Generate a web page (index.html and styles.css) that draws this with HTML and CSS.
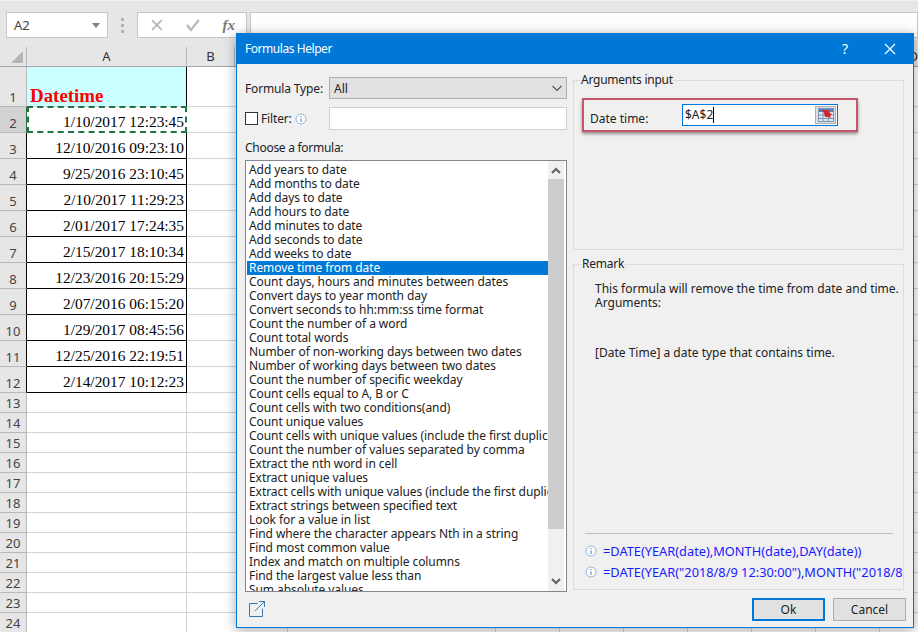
FILE: index.html
```html
<!DOCTYPE html>
<html lang="en">
<head>
    <meta charset="UTF-8">
    <title>Formulas Helper</title>
    <link rel="stylesheet" href="styles.css">
</head>
<body>
<div class="sheet">
    <div class="formula-bar">
        <div class="name-box">A2<span class="name-arrow"></span></div>
        <div class="bar-dots"><i></i><i></i><i></i></div>
        <div class="fx-box">
            <svg width="14" height="14" viewBox="0 0 14 14"><path d="M2 2l10 10M12 2L2 12" stroke="#b9b9b9" stroke-width="2" fill="none"/></svg>
            <svg width="16" height="14" viewBox="0 0 16 14"><path d="M2 7l4 5 8-10" stroke="#b9b9b9" stroke-width="2.4" fill="none"/></svg>
            <span class="fx">fx</span>
        </div>
        <div class="formula-input"></div>
    </div>

    <div class="col-heads">
        <div class="corner"><span class="corner-mark"></span></div>
        <div class="col-head col-a">A</div>
        <div class="col-head col-b">B</div>
        <div class="col-rest"><span class="col-d">D</span></div>
    </div>

    <div class="row row-title"><div class="row-head">1</div><div class="cell cell-title">Datetime</div><div class="rest"></div></div>
    <div class="row row-data"><div class="row-head row-active">2</div><div class="cell cell-active">1/10/2017 12:23:45</div><div class="rest"></div></div>
    <div class="row row-data"><div class="row-head">3</div><div class="cell">12/10/2016 09:23:10</div><div class="rest"></div></div>
    <div class="row row-data"><div class="row-head">4</div><div class="cell">9/25/2016 23:10:45</div><div class="rest"></div></div>
    <div class="row row-data"><div class="row-head">5</div><div class="cell">2/10/2017 11:29:23</div><div class="rest"></div></div>
    <div class="row row-data"><div class="row-head">6</div><div class="cell">2/01/2017 17:24:35</div><div class="rest"></div></div>
    <div class="row row-data"><div class="row-head">7</div><div class="cell">2/15/2017 18:10:34</div><div class="rest"></div></div>
    <div class="row row-data"><div class="row-head">8</div><div class="cell">12/23/2016 20:15:29</div><div class="rest"></div></div>
    <div class="row row-data"><div class="row-head">9</div><div class="cell">2/07/2016 06:15:20</div><div class="rest"></div></div>
    <div class="row row-data"><div class="row-head">10</div><div class="cell">1/29/2017 08:45:56</div><div class="rest"></div></div>
    <div class="row row-data"><div class="row-head">11</div><div class="cell">12/25/2016 22:19:51</div><div class="rest"></div></div>
    <div class="row row-data"><div class="row-head">12</div><div class="cell">2/14/2017 10:12:23</div><div class="rest"></div></div>
    <div class="row"><div class="row-head">13</div><div class="cell-empty"></div><div class="rest"></div></div>
    <div class="row"><div class="row-head">14</div><div class="cell-empty"></div><div class="rest"></div></div>
    <div class="row"><div class="row-head">15</div><div class="cell-empty"></div><div class="rest"></div></div>
    <div class="row"><div class="row-head">16</div><div class="cell-empty"></div><div class="rest"></div></div>
    <div class="row"><div class="row-head">17</div><div class="cell-empty"></div><div class="rest"></div></div>
    <div class="row"><div class="row-head">18</div><div class="cell-empty"></div><div class="rest"></div></div>
    <div class="row"><div class="row-head">19</div><div class="cell-empty"></div><div class="rest"></div></div>
    <div class="row"><div class="row-head">20</div><div class="cell-empty"></div><div class="rest"></div></div>
    <div class="row"><div class="row-head">21</div><div class="cell-empty"></div><div class="rest"></div></div>
    <div class="row"><div class="row-head">22</div><div class="cell-empty"></div><div class="rest"></div></div>
    <div class="row"><div class="row-head">23</div><div class="cell-empty"></div><div class="rest"></div></div>
    <div class="row"><div class="row-head">24</div><div class="cell-empty"></div><div class="rest"></div></div>
</div>

<div class="dialog">
    <div class="title-bar">
        <span class="title">Formulas Helper</span>
        <span class="help">?</span>
        <svg class="close" width="12" height="12" viewBox="0 0 12 12"><path d="M1 1l10 10M11 1L1 11" stroke="#fff" stroke-width="1.2" fill="none"/></svg>
    </div>

    <div class="dialog-body">
        <div class="left-col">
            <div class="form-row">
                <label class="form-label">Formula Type:</label>
                <div class="select">All
                    <svg width="12" height="7" viewBox="0 0 12 7"><path d="M1.5 1l4.5 4.5L10.500 1" stroke="#555" stroke-width="1.200" fill="none"/></svg>
                </div>
            </div>
            <div class="form-row filter-row">
                <label class="form-label filter-label">
                    <span class="checkbox"></span>Filter:
                    <svg class="info" width="12" height="12" viewBox="0 0 12 12"><circle cx="6" cy="6" r="5" fill="#fff" stroke="#8db4e0"/><path d="M6 5.500v3.500M6 3v1.200" stroke="#3f7fc4" stroke-width="1"/></svg>
                </label>
                <div class="text-input"></div>
            </div>
            <div class="choose-label">Choose a formula:</div>
            <div class="list-box">
                <ul class="formula-list">
                    <li>Add years to date</li>
                    <li>Add months to date</li>
                    <li>Add days to date</li>
                    <li>Add hours to date</li>
                    <li>Add minutes to date</li>
                    <li>Add seconds to date</li>
                    <li>Add weeks to date</li>
                    <li class="selected">Remove time from date</li>
                    <li>Count days, hours and minutes between dates</li>
                    <li>Convert days to year month day</li>
                    <li>Convert seconds to hh:mm:ss time format</li>
                    <li>Count the number of a word</li>
                    <li>Count total words</li>
                    <li>Number of non-working days between two dates</li>
                    <li>Number of working days between two dates</li>
                    <li>Count the number of specific weekday</li>
                    <li>Count cells equal to A, B or C</li>
                    <li>Count cells with two conditions(and)</li>
                    <li>Count unique values</li>
                    <li>Count cells with unique values (include the first duplicate)</li>
                    <li>Count the number of values separated by comma</li>
                    <li>Extract the nth word in cell</li>
                    <li>Extract unique values</li>
                    <li>Extract cells with unique values (include the first duplicate)</li>
                    <li>Extract strings between specified text</li>
                    <li>Look for a value in list</li>
                    <li>Find where the character appears Nth in a string</li>
                    <li>Find most common value</li>
                    <li>Index and match on multiple columns</li>
                    <li>Find the largest value less than</li>
                    <li>Sum absolute values</li>
                </ul>
                <div class="scrollbar">
                    <svg width="10" height="7" viewBox="0 0 10 7"><path d="M1 6l4-4 4 4" stroke="#606060" stroke-width="2" fill="none"/></svg>
                    <div class="scroll-track"><div class="scroll-thumb"></div></div>
                    <svg width="10" height="7" viewBox="0 0 10 7"><path d="M1 1l4 4 4-4" stroke="#606060" stroke-width="2" fill="none"/></svg>
                </div>
            </div>
        </div>

        <div class="right-col">
            <fieldset class="group group-args">
                <legend>Arguments input</legend>
                <div class="arg-box">
                    <label class="arg-label">Date time:</label>
                    <div class="arg-input">
                        <span class="arg-value">$A$2</span>
                        <div class="ref-button">
                            <svg width="16" height="14" viewBox="0 0 16 14">
                                <rect x="0.500" y="0.500" width="15" height="13" fill="#dfe9f5" stroke="#7d94b5"/>
                                <rect x="1" y="1" width="14" height="3" fill="#5b7fae"/>
                                <path d="M0 7h16M0 10.500h16M5 4v10M10.500 4v10" stroke="#7d94b5" stroke-width="1"/>
                                <path d="M4 2h6l2 3 2 1-2 2 1 2-3-1-3 0-1-4z" fill="#d8262a"/>
                            </svg>
                        </div>
                    </div>
                </div>
            </fieldset>

            <fieldset class="group group-remark">
                <legend>Remark</legend>
                <p class="remark-text">This formula will remove the time from date and time.<br>Arguments:</p>
                <p class="remark-text remark-arg">[Date Time] a date type that contains time.</p>
                <div class="examples">
                    <div class="example">
                        <svg class="info" width="12" height="12" viewBox="0 0 12 12"><circle cx="6" cy="6" r="5" fill="#fff" stroke="#8db4e0"/><path d="M6 5.500v3.500M6 3v1.200" stroke="#3f7fc4" stroke-width="1"/></svg>
                        <span class="example-text">=DATE(YEAR(date),MONTH(date),DAY(date))</span>
                    </div>
                    <div class="example">
                        <svg class="info" width="12" height="12" viewBox="0 0 12 12"><circle cx="6" cy="6" r="5" fill="#fff" stroke="#8db4e0"/><path d="M6 5.500v3.500M6 3v1.200" stroke="#3f7fc4" stroke-width="1"/></svg>
                        <span class="example-text">=DATE(YEAR("2018/8/9 12:30:00"),MONTH("2018/8/9 12:30:00"),DAY("2018/8/9 12:30:00"))</span>
                    </div>
                </div>
            </fieldset>
        </div>
    </div>

    <div class="dialog-footer">
        <svg class="share" width="18" height="18" viewBox="0 0 18 18"><path d="M9.500 3.500H1.500v13h13V8.500M7 11L16.500 1.500M11 1.500h5.500V7" stroke="#3d79b4" stroke-width="1" fill="none"/></svg>
        <div class="buttons">
            <button class="btn btn-default">Ok</button>
            <button class="btn">Cancel</button>
        </div>
    </div>
</div>
</body>
</html>
```

FILE: styles.css
```css
html, body {
    margin: 0;
    padding: 0;
    width: 918px;
    height: 632px;
    overflow: hidden;
}

body {
    position: relative;
    font-family: "Noto Sans", sans-serif;
    font-size: 12px;
    color: #222;
    background-color: #fff;
}

/* spreadsheet behind the dialog */
.sheet {
    --grid: linear-gradient(90deg,
        transparent 100px, #d4d4d4 100px 101px,
        transparent 101px 308px, #d4d4d4 308px 309px,
        transparent 309px 372px, #d4d4d4 372px 373px,
        transparent 373px 436px, #d4d4d4 436px 437px,
        transparent 437px 500px, #d4d4d4 500px 501px,
        transparent 501px 564px, #d4d4d4 564px 565px,
        transparent 565px 628px, #d4d4d4 628px 629px,
        transparent 629px 692px, #d4d4d4 692px 693px,
        transparent 693px);
    height: 632px;
    overflow: hidden;
}

.formula-bar {
    display: flex;
    align-items: center;
    height: 47px;
    box-sizing: border-box;
    padding: 2px 0 0 6px;
    background-color: #e6e6e6;
    border-top: 1px solid #f0f0f0;
}

.name-box {
    display: flex;
    align-items: center;
    justify-content: space-between;
    width: 102px;
    height: 26px;
    box-sizing: border-box;
    padding: 0 7px;
    background-color: #fff;
    border: 1px solid #c6c6c6;
    font-size: 13px;
    color: #444;
}

.name-arrow {
    border-left: 4px solid transparent;
    border-right: 4px solid transparent;
    border-top: 5px solid #808080;
}

.bar-dots {
    display: flex;
    flex-direction: column;
    gap: 3px;
    margin: 0 13px;
}

.bar-dots i {
    width: 3px;
    height: 3px;
    background-color: #b4b4b4;
}

.fx-box {
    display: flex;
    align-items: center;
    width: 110px;
    height: 26px;
    box-sizing: border-box;
    padding: 0 11px 0 12px;
    gap: 21px;
    background-color: #fff;
    border: 1px solid #c6c6c6;
}

.fx {
    font-family: "Liberation Serif", serif;
    font-style: italic;
    font-weight: bold;
    font-size: 15px;
    color: #777;
    margin-left: 1px;
}

.formula-input {
    flex: 1;
    height: 26px;
    margin-left: 3px;
    box-sizing: border-box;
    background-color: #fff;
    border: 1px solid #c6c6c6;
}

.col-heads {
    display: flex;
    height: 20px;
    background-color: #e6e6e6;
    border-bottom: 1px solid #a6a6a6;
    box-sizing: border-box;
}

.corner {
    width: 27px;
    flex: none;
    position: relative;
    box-sizing: border-box;
    border-right: 1px solid #b8b8b8;
}

.corner-mark {
    position: absolute;
    right: 3px;
    bottom: 3px;
    border-left: 12px solid transparent;
    border-bottom: 12px solid #b5b5b5;
}

.col-head {
    flex: none;
    box-sizing: border-box;
    text-align: center;
    line-height: 19px;
    font-size: 13px;
    color: #333;
    border-right: 1px solid #b8b8b8;
}

.col-a {
    width: 160px;
}

.col-b {
    width: 48px;
}

.col-rest {
    flex: 1;
    text-align: right;
    overflow: hidden;
}

.col-d {
    font-size: 13px;
    line-height: 19px;
    color: #222;
}

.row {
    display: flex;
    height: 20px;
}

.row-data {
    height: 26px;
}

.row-title {
    height: 40px;
}

.row-head {
    flex: none;
    width: 27px;
    box-sizing: border-box;
    display: flex;
    align-items: flex-end;
    justify-content: center;
    line-height: 18px;
    font-size: 13px;
    color: #444;
    background-color: #e6e6e6;
    border-bottom: 1px solid #b8b8b8;
    border-right: 1px solid #b8b8b8;
}

.row-data .row-head {
    border-right-color: #000;
}

.row-data .row-active {
    background-color: #d2d2d2;
    border-right-color: #217346;
}

.cell {
    flex: none;
    width: 160px;
    box-sizing: border-box;
    display: flex;
    align-items: flex-end;
    justify-content: flex-end;
    padding: 0 2px 0 0;
    font-family: "Liberation Serif", serif;
    font-size: 15.4px;
    line-height: 20px;
    color: #000;
    border-bottom: 1px solid #000;
    border-right: 1px solid #000;
}

.cell-title {
    justify-content: flex-start;
    padding: 0 0 0 3px;
    background-color: #ccffff;
    font-size: 18.9px;
    font-weight: bold;
    line-height: 20px;
    color: #ff0000;
    border-bottom-color: #d4d4d4;
}

.cell-active {
    margin-top: -1px;
    border: 2px dashed #217346;
    padding: 0 1px 0 0;
    line-height: 18px;
}

.cell-empty {
    flex: none;
    width: 160px;
    box-sizing: border-box;
    border-bottom: 1px solid #d4d4d4;
    border-right: 1px solid #d4d4d4;
}

.rest {
    flex: 1;
    box-sizing: border-box;
    border-bottom: 1px solid #d4d4d4;
    background-image: var(--grid);
}

/* dialog */
.dialog {
    position: absolute;
    left: 236px;
    top: 33px;
    width: 678px;
    height: 595px;
    box-sizing: border-box;
    display: flex;
    flex-direction: column;
    background-color: #f0f0f0;
    border: 1px solid #0078d7;
    border-top: 0;
    box-shadow: 0 2px 12px rgba(0, 0, 0, 0.35);
}

.title-bar {
    display: flex;
    align-items: center;
    flex: none;
    height: 31px;
    padding: 0 17px 0 8px;
    background-color: #0078d7;
    color: #fff;
}

.title {
    flex: 1;
    letter-spacing: -0.45px;
}

.help {
    font-size: 14px;
    margin-right: 36px;
}

.dialog-body {
    display: flex;
    flex: 1;
    gap: 6px;
    padding-left: 8px;
    min-height: 0;
}

.left-col {
    width: 322px;
    flex: none;
}

.form-row {
    display: flex;
    align-items: center;
    margin-top: 13px;
}

.filter-row {
    margin-top: 8px;
}

.form-label {
    display: flex;
    align-items: center;
    width: 84px;
    flex: none;
    letter-spacing: -0.15px;
}

.filter-label .info {
    margin-left: 3px;
}

.checkbox {
    width: 13px;
    height: 13px;
    box-sizing: border-box;
    margin-right: 3px;
    background-color: #fff;
    border: 1px solid #333;
}

.select {
    display: flex;
    align-items: center;
    justify-content: space-between;
    flex: 1;
    height: 22px;
    box-sizing: border-box;
    padding: 0 3px 0 4px;
    background-color: #e1e1e1;
    border: 1px solid #adadad;
}

.text-input {
    flex: 1;
    height: 23px;
    box-sizing: border-box;
    background-color: #fff;
    border: 1px solid #d0d0d0;
}

.choose-label {
    margin-top: 9px;
    height: 17px;
    line-height: 17px;
    margin-bottom: 4px;
    letter-spacing: -0.28px;
}

.list-box {
    display: flex;
    height: 432px;
    box-sizing: border-box;
    background-color: #fff;
    border: 1px solid #828790;
    overflow: hidden;
}

.formula-list {
    flex: 1;
    min-width: 0;
    list-style: none;
    margin: 2px 0 0;
    padding: 0 0 0 1px;
    overflow: hidden;
    letter-spacing: -0.07px;
}

.formula-list li {
    height: 14px;
    line-height: 14px;
    padding-left: 2px;
    white-space: nowrap;
}

.formula-list .selected {
    background-color: #0078d7;
    color: #fff;
}

.scrollbar {
    flex: none;
    width: 16px;
    margin-right: 2px;
    display: flex;
    flex-direction: column;
    align-items: center;
    background-color: #f0f0f0;
    padding: 6px 0;
    box-sizing: border-box;
}

.scroll-track {
    flex: 1;
    width: 100%;
    padding: 5px 0 49px;
    box-sizing: border-box;
}

.scroll-thumb {
    height: 100%;
    background-color: #cdcdcd;
}

.right-col {
    width: 331px;
    flex: none;
    padding-top: 9px;
}

.group {
    display: flex;
    flex-direction: column;
    box-sizing: border-box;
    margin: 0;
    padding: 0 8px;
    min-width: 0;
    border: 1px solid #dcdcdc;
}

.group legend {
    padding: 0;
    line-height: 14px;
    height: 14px;
    letter-spacing: -0.25px;
}

.group-args legend {
    margin-left: -1px;
}

.group-args {
    height: 177px;
}

.group-remark {
    height: 333px;
    margin-top: 7px;
}

.arg-box {
    display: flex;
    align-items: center;
    width: 276px;
    height: 34px;
    margin-top: 11px;
    box-sizing: border-box;
    padding: 0 0 0 6px;
    border: 2px solid #c8566a;
    box-shadow: 0 2px 3px rgba(0, 0, 0, 0.4);
}

.arg-label {
    width: 92px;
    flex: none;
    padding-top: 6px;
}

.arg-input {
    display: flex;
    align-items: center;
    justify-content: space-between;
    width: 156px;
    height: 22px;
    box-sizing: border-box;
    padding: 0 1px 0 2px;
    background-color: #fff;
    border: 1px solid #0078d7;
}

.arg-value {
    border-right: 1px solid #000;
    line-height: 16px;
}

.ref-button {
    display: flex;
    align-items: center;
    justify-content: center;
    width: 21px;
    height: 18px;
    box-sizing: border-box;
    background-color: #e1e1e1;
    border: 1px solid #adadad;
}

.remark-text {
    margin: 11px 0 0 13px;
    line-height: 14px;
    white-space: nowrap;
}

.remark-arg {
    margin-top: 36px;
}

.examples {
    margin: auto 2px 0 3px;
    padding: 6px 0 7px;
    border-top: 1px solid #c0c0c0;
}

.example {
    display: flex;
    align-items: center;
    gap: 6px;
    height: 21px;
    white-space: nowrap;
    width: 318px;
    overflow: hidden;
}

.info {
    flex: none;
}

.example-text {
    color: #1a1aff;
    font-size: 12.8px;
}

.dialog-footer {
    display: flex;
    align-items: center;
    justify-content: space-between;
    flex: none;
    height: 36px;
    padding: 0 7px 0 11px;
}

.buttons {
    display: flex;
    gap: 8px;
}

.btn {
    width: 73px;
    height: 23px;
    padding: 0;
    box-sizing: border-box;
    font-family: "Noto Sans", sans-serif;
    font-size: 12px;
    color: #222;
    background-color: #e1e1e1;
    border: 1px solid #adadad;
}

.btn-default {
    border: 2px solid #0078d7;
}
```
